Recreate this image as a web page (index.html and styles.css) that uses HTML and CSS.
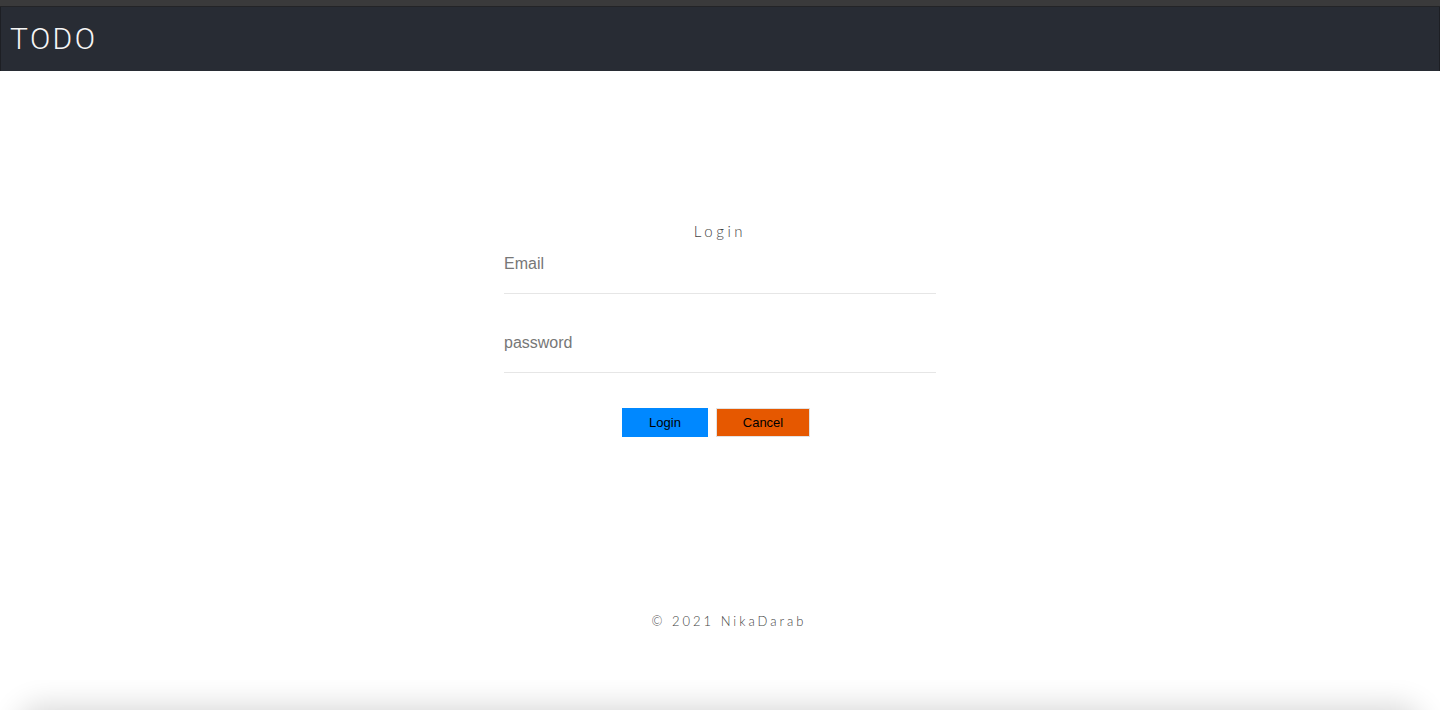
FILE: index.html
```html
<!DOCTYPE html>
<html lang="en">
<head>
<meta charset="utf-8">
<title>TODO</title>
<link rel="stylesheet" href="styles.css">
</head>
<body>
<div class="page">
  <header class="topbar">
    <div class="strip"></div>
    <div class="bar"><span class="brand">TODO</span></div>
  </header>
  <main class="main">
    <form class="login-form">
      <h2 class="form-title">Login</h2>
      <input class="field" type="email" placeholder="Email">
      <input class="field second" type="password" placeholder="password">
      <div class="actions">
        <button type="button" class="btn btn-login">Login</button>
        <button type="button" class="btn btn-cancel">Cancel</button>
      </div>
    </form>
  </main>
  <footer class="footer">© 2021 NikaDarab</footer>
  <div class="shade"><div class="shade-caster"></div></div>
</div>
</body>
</html>
```

FILE: styles.css
```css
html, body {
  margin: 0;
  padding: 0;
  background: #ffffff;
}
body {
  overflow: hidden;
}
.page {
  height: 710px;
  display: flex;
  flex-direction: column;
  overflow: hidden;
}
.topbar {
  flex: none;
}
.strip {
  height: 6px;
  background: #3a3a3b;
  border-bottom: 1px solid #232427;
}
.bar {
  height: 64px;
  background: #282c34;
  border-left: 1px solid #1d1f24;
  border-right: 1px solid #1d1f24;
  padding-left: 9px;
  display: flex;
  align-items: center;
}
.brand {
  font-family: Roboto, Lato, sans-serif;
  font-weight: 300;
  font-size: 30px;
  line-height: 64px;
  letter-spacing: 2.4px;
  color: #f6f6f6;
}
.main {
  flex: none;
  display: flex;
  justify-content: center;
  padding-top: 150px;
}
.login-form {
  width: 432px;
  display: flex;
  flex-direction: column;
  margin: 0;
}
.form-title {
  margin: 0 0 3px;
  text-align: center;
  font-family: Lato, "Noto Sans", sans-serif;
  font-weight: 300;
  font-size: 15px;
  line-height: 20px;
  letter-spacing: 3.6px;
  color: #444;
}
.field {
  display: block;
  box-sizing: content-box;
  width: 432px;
  height: 20px;
  margin: 0;
  padding: 10px 0 19px;
  border: none;
  border-bottom: 1px solid #e6e6e6;
  outline: none;
  background: transparent;
  font-family: "Liberation Sans", Arial, sans-serif;
  font-size: 16px;
  color: #333;
}
.field::placeholder {
  color: #777777;
}
.field.second {
  margin-top: 29px;
}
.actions {
  display: flex;
  justify-content: center;
  margin-top: 35px;
}
.btn {
  height: 29px;
  margin: 0 8px 0 0;
  padding: 0;
  font-family: "Liberation Sans", Arial, sans-serif;
  font-size: 13px;
  color: #000;
  cursor: pointer;
}
.btn-login {
  width: 86px;
  background: #0088ff;
  border: none;
}
.btn-cancel {
  width: 94px;
  background: #e65800;
  border: 1px solid #e2e2e2;
}
.footer {
  flex: none;
  margin-top: 174px;
  text-align: center;
  font-family: Lato, "Noto Sans", sans-serif;
  font-weight: 300;
  font-size: 13px;
  line-height: 20px;
  letter-spacing: 3px;
  color: #444;
  padding-left: 18px;
}
.shade {
  margin-top: auto;
  height: 30px;
  overflow: hidden;
  flex: none;
}
.shade-caster {
  margin: 32px 24px 0;
  height: 60px;
  border-radius: 18px;
  box-shadow: 0 0 30px 6px rgba(0, 0, 0, 0.16);
}
```
